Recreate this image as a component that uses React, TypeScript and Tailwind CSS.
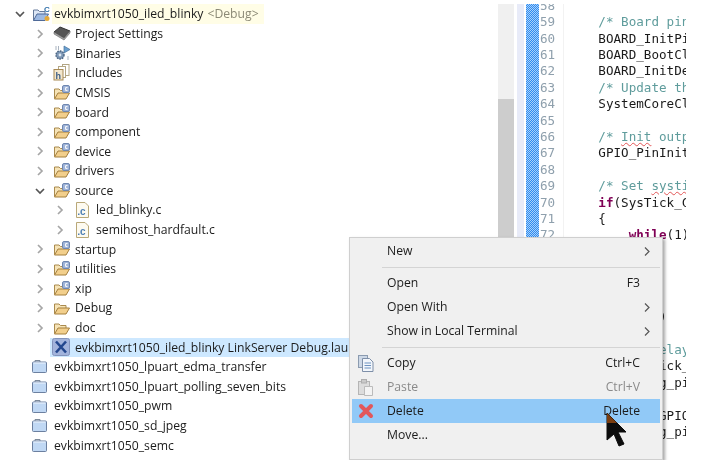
import type { ReactNode } from 'react';

const Chevron = ({ open }: { open?: boolean }) => (
    <svg width="10" height="10" viewBox="0 0 10 10" className="shrink-0">
        <path
            d={open ? 'M1 3 L5 7 L9 3' : 'M3 1 L7 5 L3 9'}
            fill="none"
            stroke={open ? '#555' : '#a6a6a6'}
            strokeWidth="1.7"
        />
    </svg>
);

const OpenFolder = ({ badge }: { badge?: boolean }) => (
    <svg width="18" height="16" viewBox="0 0 18 16" className="shrink-0">
        <path d="M1.5 13.5 V4 H6 L7.5 5.5 H13 V8" fill="#f6e3b6" stroke="#a98a4e" />
        <path d="M1.5 14 L5 8 H16.5 L13 14 Z" fill="#f2cf8c" stroke="#a5803f" />
        {badge && (
            <g>
                <rect x="9.5" y="0.5" width="7" height="7" rx="1.5" fill="#9fb4d8" stroke="#6f87b0" />
                <path d="M14.5 2.6 H12.6 V5.4 H14.5" fill="none" stroke="#fff" strokeWidth="1" />
            </g>
        )}
    </svg>
);

const ProjectFolder = () => (
    <svg width="16" height="15" viewBox="0 0 16 15" className="shrink-0">
        <path d="M3 3 V1.5 H8 V3" fill="#e6e9ee" stroke="#7d8a9a" />
        <rect x="0.5" y="3" width="14" height="10.5" rx="1" fill="#c0d8f4" stroke="#6c80a0" />
        <path d="M1.5 4 H13.5" stroke="#eef4fc" />
    </svg>
);

const RootIcon = () => (
    <svg width="20" height="18" viewBox="0 0 20 18" className="shrink-0">
        <path d="M1.5 15.5 V5 H6 L7.5 6.5 H13 V9" fill="#dce6f5" stroke="#64799a" />
        <path d="M1.5 15.5 L5 9 H16.5 L13 15.5 Z" fill="#9db9e2" stroke="#4f6a98" />
        <text x="12" y="7" fontSize="8" fontWeight="700" fontFamily="Liberation Sans, sans-serif" fill="#2f6fa8">C</text>
        <circle cx="15" cy="13.5" r="2.5" fill="#e3a93a" />
    </svg>
);

const ChipIcon = () => (
    <svg width="18" height="15" viewBox="0 0 18 15" className="shrink-0">
        <path d="M1 6 L7 1 L17 5 L11 12 Z" fill="#555" stroke="#333" />
        <path d="M1 6 L1 8 L11 14 L17 7 V5 L11 12 Z" fill="#a0a0a0" stroke="#666" strokeWidth="0.6" />
    </svg>
);

const BinariesIcon = () => (
    <svg width="18" height="17" viewBox="0 0 18 17" className="shrink-0">
        <circle cx="7" cy="10" r="4" fill="#7d97b5" stroke="#4c6480" strokeWidth="1.4" strokeDasharray="1.6 1" />
        <circle cx="7" cy="10" r="1.4" fill="#dfe8f2" />
        <path d="M11 1 L17 4.5 L11 8 Z" fill="#6aa0d0" stroke="#47739c" strokeWidth="0.7" />
        <path d="M3 1 V5 M5.5 1 V5 M15 11 V15" stroke="#a9b3bf" />
    </svg>
);

const IncludesIcon = () => (
    <svg width="18" height="17" viewBox="0 0 18 17" className="shrink-0">
        <rect x="9.5" y="0.5" width="6.5" height="11" fill="#fff" stroke="#b3a684" />
        <rect x="5.5" y="2.5" width="7" height="11" fill="#fff" stroke="#b3a684" />
        <rect x="1" y="5.5" width="9" height="10.5" fill="#f3e7cd" stroke="#a88a55" />
        <text x="2.6" y="14.5" fontSize="9" fontWeight="700" fontFamily="Liberation Sans, sans-serif" fill="#3f5f85">h</text>
    </svg>
);

const FileCIcon = () => (
    <svg width="13" height="16" viewBox="0 0 13 16" className="shrink-0">
        <path d="M0.5 0.5 H9 L12.5 4 V15.5 H0.5 Z" fill="#fdfaf0" stroke="#b9a878" />
        <rect x="2" y="11.5" width="1.5" height="1.5" fill="#4f80b5" />
        <text x="4" y="13" fontSize="10" fontWeight="700" fontFamily="Liberation Sans, sans-serif" fill="#4f80b5">c</text>
    </svg>
);

const LaunchIcon = () => (
    <svg width="18" height="18" viewBox="0 0 18 18" className="shrink-0">
        <rect x="0.5" y="0.5" width="17" height="17" rx="2" fill="#a3b4dc" stroke="#8494bc" />
        <path d="M4 3.5 L14 14.5 M14 3.5 L4 14.5" stroke="#24488f" strokeWidth="2.6" />
    </svg>
);

const CopyIcon = () => (
    <svg width="16" height="17" viewBox="0 0 16 17">
        <rect x="0.5" y="0.5" width="9" height="12" fill="#cdd8e6" stroke="#8b9bb0" />
        <path d="M4.5 3.5 H11.5 L15 7 V16.5 H4.5 Z" fill="#f2f6fb" stroke="#7e8fa8" />
        <path d="M6.5 8 H13 M6.5 10.5 H13 M6.5 13 H13" stroke="#6d92c0" />
    </svg>
);

const PasteIcon = () => (
    <svg width="15" height="17" viewBox="0 0 15 17">
        <rect x="0.5" y="2.5" width="11" height="13" fill="#dcdcdc" stroke="#b5b5b5" />
        <rect x="3.5" y="0.5" width="5" height="3.5" fill="#c9c9c9" stroke="#adadad" />
        <path d="M6.5 7.5 H14.5 V16.5 H6.5 Z" fill="#f3f3f3" stroke="#bbb" />
    </svg>
);

const DeleteIcon = () => (
    <svg width="16" height="16" viewBox="0 0 16 16">
        <path d="M3 3 L13 13 M13 3 L3 13" stroke="#e2575a" strokeWidth="4" strokeLinecap="round" />
    </svg>
);

const treeRows = [
    { label: 'Project Settings', icon: <ChipIcon /> },
    { label: 'Binaries', icon: <BinariesIcon /> },
    { label: 'Includes', icon: <IncludesIcon /> },
    { label: 'CMSIS', icon: <OpenFolder badge /> },
    { label: 'board', icon: <OpenFolder badge /> },
    { label: 'component', icon: <OpenFolder badge /> },
    { label: 'device', icon: <OpenFolder badge /> },
    { label: 'drivers', icon: <OpenFolder badge /> },
];

const afterSource = [
    { label: 'startup', icon: <OpenFolder badge /> },
    { label: 'utilities', icon: <OpenFolder badge /> },
    { label: 'xip', icon: <OpenFolder badge /> },
    { label: 'Debug', icon: <OpenFolder /> },
    { label: 'doc', icon: <OpenFolder /> },
];

const projects = [
    'evkbimxrt1050_lpuart_edma_transfer',
    'evkbimxrt1050_lpuart_polling_seven_bits',
    'evkbimxrt1050_pwm',
    'evkbimxrt1050_sd_jpeg',
    'evkbimxrt1050_semc',
];

function FolderRow({ label, icon, open }: { label: string; icon: ReactNode; open?: boolean }) {
    return (
        <div className="flex items-center h-[19.6px] pl-[35px]">
            <Chevron open={open} />
            <span className="ml-[8px] w-[22px] flex">{icon}</span>
            <span className="pt-[1px]">{label}</span>
        </div>
    );
}

type Seg = { t: string; c?: string };

const cmt = 'text-[#5f9c9c]';
const kw = 'font-bold text-[#7f0055]';
const squiggle = 'underline decoration-wavy decoration-[#e25555] decoration-1';

const code: Seg[][] = [
    [],
    [{ t: '    /* Board pin mux */', c: cmt }],
    [{ t: '    BOARD_InitPins();' }],
    [{ t: '    BOARD_BootClockRUN();' }],
    [{ t: '    BOARD_InitDebugConsole();' }],
    [{ t: '    /* Update the core clock */', c: cmt }],
    [{ t: '    SystemCoreClockUpdate();' }],
    [],
    [{ t: '    /* ', c: cmt }, { t: 'Init', c: `${cmt} ${squiggle}` }, { t: ' output LED */', c: cmt }],
    [{ t: '    GPIO_PinInit(EXAMPLE_LED);' }],
    [],
    [{ t: '    /* Set ', c: cmt }, { t: 'systick', c: `${cmt} ${squiggle}` }, { t: ' reload */', c: cmt }],
    [{ t: '    ' }, { t: 'if', c: kw }, { t: '(SysTick_Config(SystemCoreClock))' }],
    [{ t: '    {' }],
    [{ t: '        ' }, { t: 'while', c: kw }, { t: '(1)' }],
    [{ t: '        {' }],
    [{ t: '        }' }],
    [{ t: '    }' }],
    [],
    [{ t: '    ' }, { t: 'while', c: kw }, { t: ' (1)' }],
    [{ t: '    {' }],
    [{ t: '        /* Delay 1000 ms */', c: cmt }],
    [{ t: '        SysTick_DelayTicks(1000U);' }],
    [{ t: '        ' }, { t: 'if', c: kw }, { t: ' (g_pinSet)' }],
    [{ t: '        {' }],
    [{ t: '            GPIO_PinWrite(EXAMPLE);' }],
    [{ t: '            g_pinSet = false;' }],
];

function MenuItem({
    label,
    shortcut,
    arrow,
    icon,
    disabled,
    active,
}: {
    label: string;
    shortcut?: string;
    arrow?: boolean;
    icon?: ReactNode;
    disabled?: boolean;
    active?: boolean;
}) {
    return (
        <div className={`flex items-center h-[24px] ${active ? 'bg-[#91c9f7]' : ''} ${disabled ? 'text-[#8a8a8a]' : ''}`}>
            <span className="w-[25px] ml-[1px] flex justify-center">{icon}</span>
            <span className="flex-1 ml-[9px] pt-[1px]">{label}</span>
            {shortcut && <span className="pr-[20px] pt-[1px]">{shortcut}</span>}
            {arrow && (
                <svg width="6" height="9" viewBox="0 0 6 9" className="mr-[10px]">
                    <path d="M1 0.5 L5 4.5 L1 8.5" fill="none" stroke="#555" strokeWidth="1.2" />
                </svg>
            )}
        </div>
    );
}

export default function App() {
    return (
        <div className="relative w-[706px] h-[460px] overflow-hidden bg-white flex pt-[4px] text-[12.2px] text-[#1c1c1c] font-['Open_Sans',sans-serif] blur-[0.35px]">
            {/* project tree */}
            <div className="w-[498px] shrink-0 overflow-hidden whitespace-nowrap">
                <div className="flex items-center h-[20px] pl-[15px]">
                    <Chevron open />
                    <span className="ml-[7px] w-[20px] flex">
                        <RootIcon />
                    </span>
                    <span className="bg-[#fffde6] w-[212px] h-[20px] flex items-center pl-[2px] pt-[1px]">
                        evkbimxrt1050_iled_blinky <span className="ml-[4px] text-[#8c8a76]">&lt;Debug&gt;</span>
                    </span>
                </div>
                {treeRows.map(r => (
                    <FolderRow key={r.label} label={r.label} icon={r.icon} />
                ))}
                <FolderRow label="source" icon={<OpenFolder badge />} open />
                {['led_blinky.c', 'semihost_hardfault.c'].map(f => (
                    <div key={f} className="flex items-center h-[19.6px] pl-[55px]">
                        <Chevron />
                        <span className="ml-[11px] w-[20px] flex">
                            <FileCIcon />
                        </span>
                        <span className="pt-[1px]">{f}</span>
                    </div>
                ))}
                {afterSource.map(r => (
                    <FolderRow key={r.label} label={r.label} icon={r.icon} />
                ))}
                <div className="flex items-center h-[19.6px] pl-[50px]">
                    <div className="flex items-center bg-[#cde8ff] flex-1 h-[19.6px] pl-[2px]">
                        <span className="w-[23px] flex">
                            <LaunchIcon />
                        </span>
                        <span className="pt-[1px]">evkbimxrt1050_iled_blinky LinkServer Debug.launch</span>
                    </div>
                </div>
                {projects.map(p => (
                    <div key={p} className="flex items-center h-[19.6px] pl-[32px]">
                        <span className="w-[22px] flex">
                            <ProjectFolder />
                        </span>
                        <span className="pt-[1px]">{p}</span>
                    </div>
                ))}
            </div>

            {/* tree scrollbar */}
            <div className="w-[16px] shrink-0 bg-[#f0f0f0] pt-[95px]">
                <div className="h-full bg-[#cdcdcd]" />
            </div>

            {/* editor */}
            <div className="w-[169px] shrink-0 ml-[3px] flex overflow-hidden font-['DejaVu_Sans_Mono',monospace] text-[12.6px] leading-[16.4px]">
                <div className="w-[7px] bg-[#e8ebf8] shrink-0" />
                <div className="w-[2px] shrink-0" />
                <div className="w-[13px] shrink-0 bg-[repeating-conic-gradient(#2f8af0_0_25%,#a9d2fa_0_50%)] bg-[length:2px_2px]" />
                <div className="w-[25px] shrink-0 border-r border-[#f2f2f2] -mt-[6.2px] text-[#8fa0ad] pl-[1px]">
                    {code.map((_, i) => (
                        <div key={i} className="h-[16.4px]">
                            {58 + i}
                        </div>
                    ))}
                </div>
                <div className="flex-1 -mt-[6.2px] pl-[4px] whitespace-pre text-[#1a1a1a]">
                    {code.map((line, i) => (
                        <div key={i} className="h-[16.4px]">
                            {line.map((s, j) => (
                                <span key={j} className={s.c}>
                                    {s.t}
                                </span>
                            ))}
                        </div>
                    ))}
                </div>
            </div>

            {/* context menu */}
            <div className="absolute left-[349px] top-[237px] w-[314px] h-[223px] bg-[#f0f0f0] border border-[#cfcfcf] pl-[2px] pr-[2px] pt-[1px] shadow-[2px_2px_3px_rgba(0,0,0,0.35)]">
                <MenuItem label="New" arrow />
                <div className="h-[8px] flex items-center pl-[30px]">
                    <div className="h-px w-full bg-[#d4d4d4]" />
                </div>
                <MenuItem label="Open" shortcut="F3" />
                <MenuItem label="Open With" arrow />
                <MenuItem label="Show in Local Terminal" arrow />
                <div className="h-[8px] flex items-center pl-[30px]">
                    <div className="h-px w-full bg-[#d4d4d4]" />
                </div>
                <MenuItem label="Copy" shortcut="Ctrl+C" icon={<CopyIcon />} />
                <MenuItem label="Paste" shortcut="Ctrl+V" icon={<PasteIcon />} disabled />
                <MenuItem label="Delete" shortcut="Delete" icon={<DeleteIcon />} active />
                <MenuItem label="Move..." />
            </div>

            {/* mouse pointer */}
            <svg width="22" height="36" viewBox="0 0 22 36" className="absolute left-[606px] top-[412px]">
                <path d="M1 1 L20 20 L12 20 L18 32 L13 34 L8 22 L1 28 Z" fill="#0c0c0c" stroke="#0c0c0c" />
                <path d="M1 1 L11 11 L1 11 Z" fill="#7a3d10" />
            </svg>
        </div>
    );
}
